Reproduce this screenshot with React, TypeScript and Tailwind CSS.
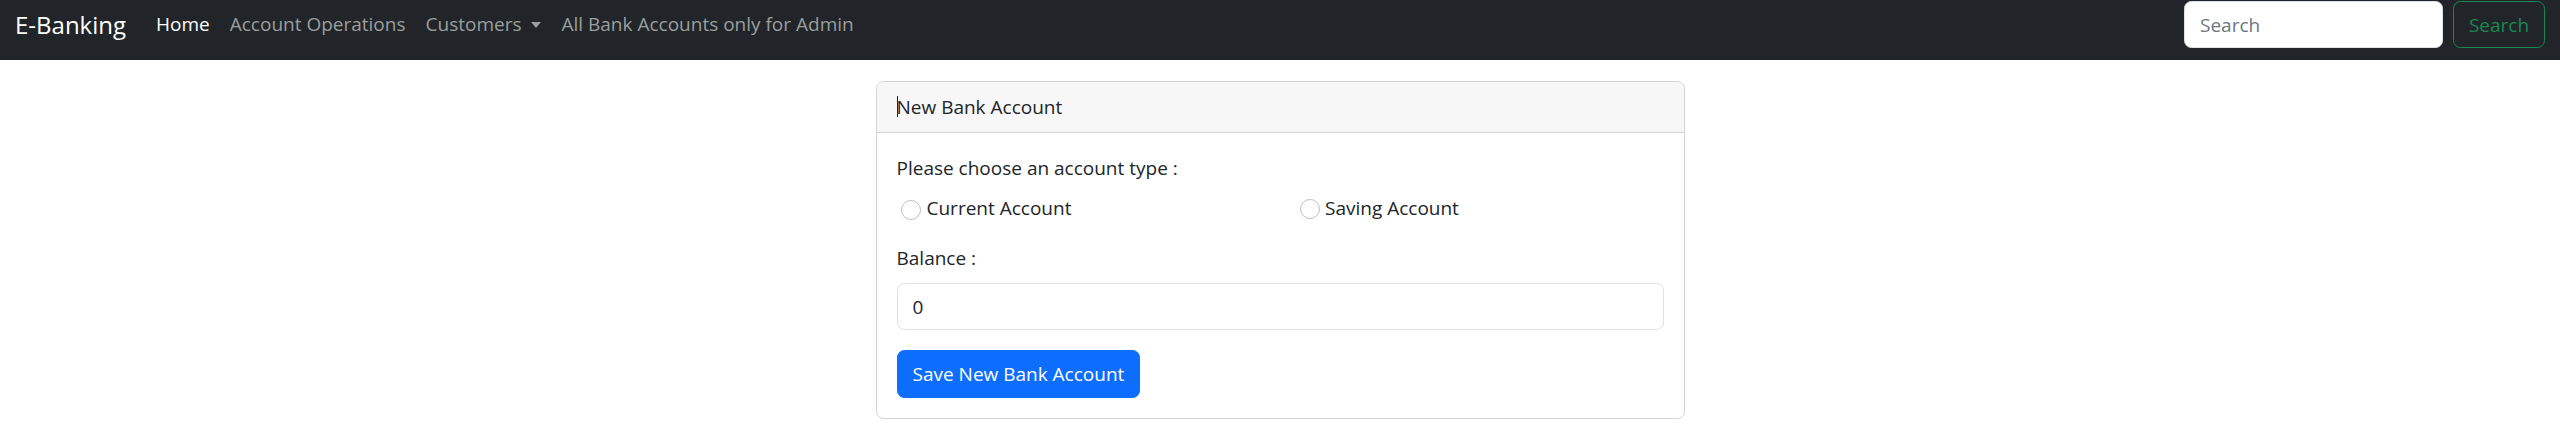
import React from "react";

export default function App() {
  return (
    <div
      className="min-h-[448px] w-full bg-white text-[#212529]"
      style={{ fontFamily: '"Open Sans", "Noto Sans", sans-serif' }}
    >
      {/* Navbar */}
      <nav className="flex h-[60px] items-start justify-between bg-[#212529] px-[15px]">
        <div className="flex items-start">
          <a className="mr-[20px] mt-[6px] text-[24px] leading-[37.5px] text-white">E-Banking</a>
          <ul className="mt-[9px] flex items-start text-[19px] leading-[30px]">
            <li>
              <a className="block px-[10px] text-white">Home</a>
            </li>
            <li>
              <a className="block px-[10px] text-[#9b9d9e]">Account Operations</a>
            </li>
            <li>
              <a className="flex items-center px-[10px] text-[#9b9d9e]">
                Customers
                <span className="ml-[10px] mt-[1px] inline-block h-0 w-0 border-x-[5px] border-t-[6px] border-x-transparent border-t-[#9b9d9e]" />
              </a>
            </li>
            <li>
              <a className="block px-[10px] text-[#9b9d9e]">All Bank Accounts only for Admin</a>
            </li>
          </ul>
        </div>
        <form className="mt-[1px] flex items-start">
          <input
            type="search"
            placeholder="Search"
            className="mr-[10px] h-[47px] w-[259px] rounded-[7.5px] border border-[#dee2e6] bg-white px-[15px] text-[19px] leading-[30px] text-[#212529] placeholder:text-[#6c757d] outline-none"
          />
          <button
            type="button"
            className="h-[47px] w-[92px] rounded-[7.5px] border border-[#198754] bg-transparent text-center text-[19px] leading-[30px] text-[#198754]"
          >
            Search
          </button>
        </form>
      </nav>

      {/* Card */}
      <div className="mx-auto mt-[21px] w-[809px] rounded-[7.5px] border border-[#d3d3d3]">
        <div className="relative rounded-t-[7.5px] border-b border-[#d3d3d3] bg-[#f7f7f7] px-[20px] py-[10px] text-[19px] leading-[30px]">
          <span className="relative">
            <span className="absolute left-0 top-[2px] h-[21px] w-px bg-[#212529]" />
            New Bank Account
          </span>
        </div>
        <div className="px-[20px] pb-[20px] pt-[20px] text-[19px] leading-[30px]">
          <div className="mb-[10px]">Please choose an account type :</div>
          <div className="grid grid-cols-2">
            <label className="flex items-start pl-[4px]">
              <span className="mr-[6px] mt-[7px] inline-block h-[20px] w-[20px] rounded-full border border-[#bfbfbf] bg-white" />
              Current Account
            </label>
            <label className="flex items-start pl-[20px]">
              <span className="mr-[5px] mt-[6px] inline-block h-[20px] w-[20px] rounded-full border border-[#bfbfbf] bg-white" />
              Saving Account
            </label>
          </div>
          <div className="mt-[20px] mb-[10px]">Balance :</div>
          <input
            type="text"
            defaultValue="0"
            className="block h-[47px] w-full rounded-[7.5px] border border-[#dee2e6] bg-white px-[15px] text-[19px] leading-[30px] text-[#212529] outline-none"
          />
          <button
            type="button"
            className="mt-[20px] h-[48px] rounded-[7.5px] border border-[#0d6efd] bg-[#0d6efd] px-[15px] text-[19px] leading-[30px] text-white"
          >
            Save New Bank Account
          </button>
        </div>
      </div>
    </div>
  );
}
